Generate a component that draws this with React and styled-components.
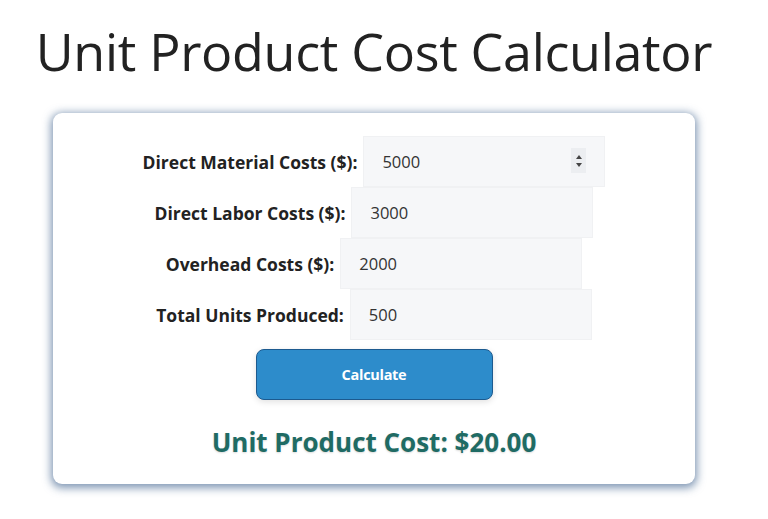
import React, { useState } from 'react';
import styled, { createGlobalStyle } from 'styled-components';

const GlobalStyle = createGlobalStyle`
  html, body {
    margin: 0;
    padding: 0;
    background: #ffffff;
    font-family: 'Open Sans', 'Noto Sans', sans-serif;
  }
  input[type='number']::-webkit-inner-spin-button,
  input[type='number']::-webkit-outer-spin-button {
    -webkit-appearance: none;
    margin: 0;
  }
`;

const FIELDS = [
  { key: 'material', label: 'Direct Material Costs ($):', value: '5000', spinner: true },
  { key: 'labor', label: 'Direct Labor Costs ($):', value: '3000' },
  { key: 'overhead', label: 'Overhead Costs ($):', value: '2000' },
  { key: 'units', label: 'Total Units Produced:', value: '500' },
];

const App = () => {
  const [values, setValues] = useState(() =>
    FIELDS.reduce((acc, f) => ({ ...acc, [f.key]: f.value }), {})
  );
  const [result, setResult] = useState(20);

  function handleCalculate() {
    const total =
      Number(values.material) + Number(values.labor) + Number(values.overhead);
    const units = Number(values.units);
    setResult(units > 0 ? total / units : 0);
  }

  return (
    <Page>
      <GlobalStyle />
      <Title>Unit Product Cost Calculator</Title>
      <Card>
        {FIELDS.map((f) => (
          <Row key={f.key}>
            <Label htmlFor={f.key}>{f.label}</Label>
            <InputWrap>
              <Input
                id={f.key}
                type="number"
                value={values[f.key]}
                onChange={(e) => setValues({ ...values, [f.key]: e.target.value })}
              />
              {f.spinner && (
                <Spinner>
                  <svg width="8" height="18" viewBox="0 0 8 18">
                    <path d="M4 3 L7 7 L1 7 Z" fill="#444" />
                    <path d="M1 11 L7 11 L4 15 Z" fill="#444" />
                  </svg>
                </Spinner>
              )}
            </InputWrap>
          </Row>
        ))}
        <Button onClick={handleCalculate}>Calculate</Button>
        <Result>Unit Product Cost: ${result.toFixed(2)}</Result>
      </Card>
    </Page>
  );
};

const Page = styled.div`
  width: 748px;
  display: flex;
  flex-direction: column;
  align-items: center;
  padding-bottom: 40px;
`;

const Title = styled.h1`
  margin: 16px 0 0;
  font-size: 52px;
  font-weight: 400;
  color: #222;
  line-height: 70px;
  letter-spacing: -0.3px;
`;

const Card = styled.div`
  box-sizing: border-box;
  width: 642px;
  margin-top: 27px;
  padding: 23px 0 24px;
  background: #fff;
  border-radius: 9px;
  box-shadow: 0 2px 9px 2px rgba(60, 95, 140, 0.65);
  display: flex;
  flex-direction: column;
  align-items: center;
`;

const Row = styled.div`
  display: flex;
  align-items: center;
  gap: 6px;
`;

const Label = styled.label`
  font-size: 17.5px;
  font-weight: 700;
  color: #222;
`;

const InputWrap = styled.div`
  position: relative;
`;

const Input = styled.input`
  box-sizing: border-box;
  width: 242px;
  height: 51px;
  padding: 0 18px;
  border: 1px solid #f0f1f3;
  background: #f6f7f9;
  font-family: 'Open Sans', 'Noto Sans', sans-serif;
  font-size: 16.5px;
  color: #333;
  outline: none;
  -moz-appearance: textfield;
`;

const Spinner = styled.div`
  position: absolute;
  right: 19px;
  top: 12px;
  width: 15px;
  height: 25px;
  background: #eceef1;
  display: flex;
  align-items: center;
  justify-content: center;
`;

const Button = styled.button`
  margin-top: 9px;
  width: 237px;
  height: 51px;
  border: 1px solid #1c5a8f;
  border-radius: 8px;
  background: #2d8ccb;
  color: #fff;
  font-family: 'Open Sans', 'Noto Sans', sans-serif;
  font-size: 14.5px;
  font-weight: 700;
  letter-spacing: -0.3px;
  box-shadow: 0 2px 6px rgba(0, 0, 0, 0.12);
  cursor: pointer;
`;

const Result = styled.div`
  margin-top: 24px;
  font-size: 26px;
  font-weight: 700;
  color: #1f6b64;
  text-shadow: 0 1px 2px rgba(0, 0, 0, 0.15);
`;

export default App;
